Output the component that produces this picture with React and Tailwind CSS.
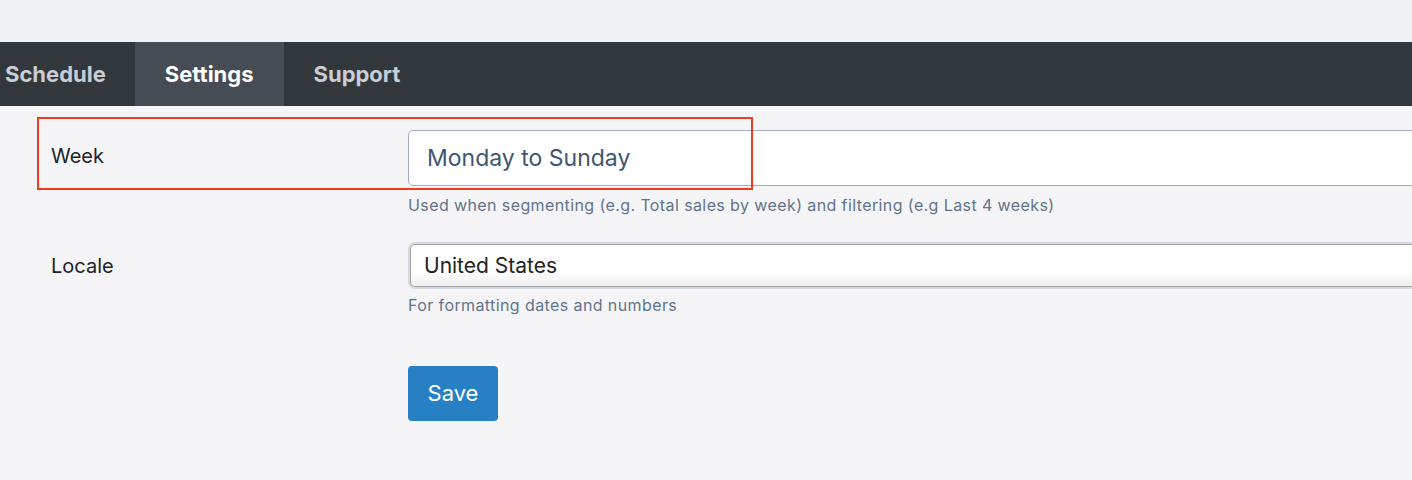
export default function App() {
  const tabs = ['Schedule', 'Settings', 'Support']
  return (
    <div className="min-h-[480px] bg-[#f5f5f7] overflow-hidden" style={{ fontFamily: 'Inter, "Noto Sans", sans-serif' }}>
      <div className="h-[42px] bg-[#f0f1f3]" />
      {/* Nav */}
      <nav className="h-[64px] bg-[#32373c] flex">
        {tabs.map((t, i) => (
          <div
            key={t}
            className={
              'flex items-center text-[22px] font-bold ' +
              (i === 0 ? 'pl-[5px] pr-[29px] ' : 'px-[30px] ') +
              (t === 'Settings' ? 'bg-[#464c54] text-white' : 'text-[#c9ced6]')
            }
          >
            {t}
          </div>
        ))}
      </nav>

      {/* Form */}
      <div className="relative pl-[51px] pt-[24px]">
        <div className="absolute left-[37px] top-[11px] w-[716px] h-[73px] border-2 border-[#f03a22] pointer-events-none" />

        <div className="grid grid-cols-[357px_1fr]">
          <div className="flex items-center h-[56px] pb-[4px] text-[20px] text-[#1d2327]">Week</div>
          <div>
            <div className="h-[56px] w-[1100px] bg-white border border-[#a3afc0] rounded-[5px] flex items-center pl-[18px] text-[23px] text-[#3f5672]">
              Monday to Sunday
            </div>
            <p className="mt-[9px] text-[16px] leading-[20px] tracking-[0.4px] text-[#62738c]">
              Used when segmenting (e.g. Total sales by week) and filtering (e.g Last 4 weeks)
            </p>
          </div>

          <div className="flex items-center h-[47px] mt-[27px] text-[20px] text-[#1d2327]">Locale</div>
          <div className="mt-[27px]">
            <div className="h-[47px] w-[1100px] rounded-[7px] bg-[#d6dae0] p-[2px]">
              <div className="h-full rounded-[5px] border border-[#a2a6ab] bg-gradient-to-b from-white from-60% to-[#f0f0f0] flex items-center pl-[13px] text-[21px] text-[#222]">
                United States
              </div>
            </div>
            <p className="mt-[6px] text-[16px] leading-[20px] tracking-[0.4px] text-[#62738c]">For formatting dates and numbers</p>
          </div>

          <div />
          <div className="mt-[51px]">
            <button className="h-[55px] w-[90px] rounded-[4px] bg-[#2780c4] text-white text-[22px]">Save</button>
          </div>
        </div>
      </div>
    </div>
  )
}
